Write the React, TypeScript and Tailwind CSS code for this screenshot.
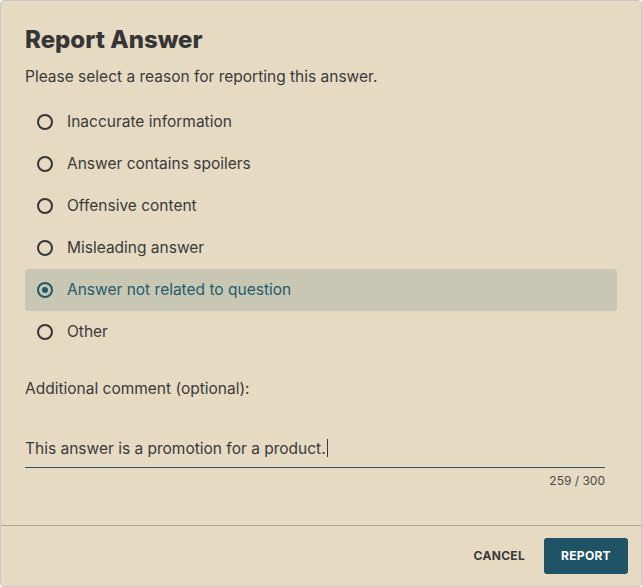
const reasons = [
  'Inaccurate information',
  'Answer contains spoilers',
  'Offensive content',
  'Misleading answer',
  'Answer not related to question',
  'Other',
];

function Radio({ checked }: { checked: boolean }) {
  return (
    <span
      className={`flex h-[16px] w-[16px] shrink-0 items-center justify-center rounded-full border-2 ${
        checked ? 'border-[#24596b]' : 'border-[#363636]'
      }`}
    >
      {checked && <span className="h-[6px] w-[6px] rounded-full bg-[#24596b]" />}
    </span>
  );
}

export default function App() {
  const selected = 4;

  return (
    <div
      className="flex h-[587px] w-[642px] flex-col rounded-[4px] border border-[#cbc8c3] bg-[#e6dac3] text-[#3a3a3a]"
      style={{ fontFamily: 'Inter, "Noto Sans", sans-serif' }}
    >
      <div className="flex-1 px-6 pt-[24px]">
        <h1 className="text-[24px] font-extrabold leading-[30px] text-[#363636]">Report Answer</h1>
        <p className="mt-[11px] text-[15.5px] leading-[22px]">Please select a reason for reporting this answer.</p>

        <div className="mt-[13px] flex flex-col">
          {reasons.map((r, i) => (
            <div
              key={r}
              className={`flex h-[42px] items-center gap-[14px] rounded-[3px] pl-[12px] text-[15.5px] ${
                i === selected ? 'bg-[#c8c7b4] text-[#245b6d]' : ''
              }`}
            >
              <Radio checked={i === selected} />
              <span>{r}</span>
            </div>
          ))}
        </div>

        <p className="mt-[25px] text-[15.5px] leading-[22px]">Additional comment (optional):</p>

        <div className="mr-[12px] mt-[36px] border-b border-[#2c5563] pb-[7px] text-[15.5px] leading-[22px]">
          This answer is a promotion for a product.
          <span className="ml-[1px] inline-block h-[18px] w-[1px] translate-y-[3px] bg-[#3a3a3a]" />
        </div>
        <div className="mr-[12px] mt-[5px] text-right text-[12px] leading-[16px] text-[#4a4a4a]">259 / 300</div>
      </div>

      <div className="flex h-[61px] items-center justify-end gap-[19px] border-t border-[#b3a896] pr-[13px]">
        <button className="text-[12px] font-bold tracking-[0.3px] text-[#3a3a3a]">CANCEL</button>
        <button className="h-[36px] w-[84px] rounded-[3px] bg-[#1f5366] text-[12px] font-bold tracking-[0.3px] text-white">
          REPORT
        </button>
      </div>
    </div>
  );
}
